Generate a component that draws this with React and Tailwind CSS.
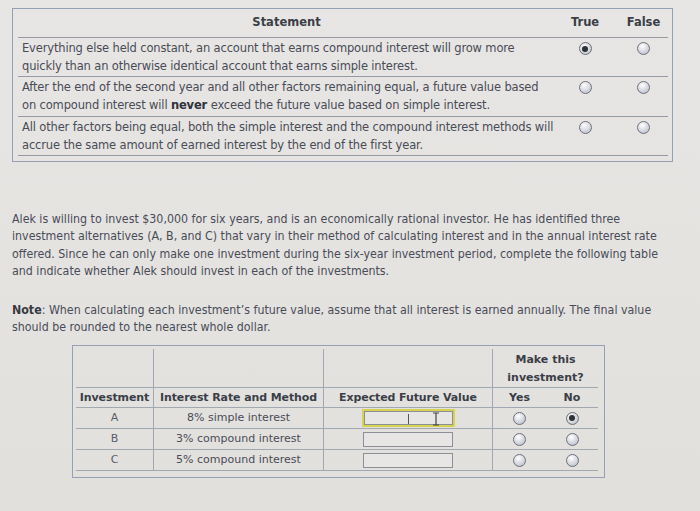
import React from "react";

const Radio = ({ checked = false }) => (
  <span
    className={
      "inline-block w-[13px] h-[13px] rounded-full border border-[#6d717b] relative " +
      (checked
        ? "bg-[radial-gradient(circle_at_40%_35%,#ffffff,#c9ccd3_70%)]"
        : "bg-[radial-gradient(circle_at_40%_30%,#ffffff,#c4c8d2_75%,#9ca1ad)]")
    }
  >
    {checked && (
      <span className="absolute left-[2.5px] top-[2.5px] w-[6px] h-[6px] rounded-full bg-[#2f3138]" />
    )}
  </span>
);

const statements = [
  {
    lines: [
      "Everything else held constant, an account that earns compound interest will grow more",
      "quickly than an otherwise identical account that earns simple interest.",
    ],
    answer: "true",
    h: "h-[39px]",
  },
  {
    lines: [
      "After the end of the second year and all other factors remaining equal, a future value based",
      <>on compound interest will <b className="font-bold text-[#2e323a]">never</b> exceed the future value based on simple interest.</>,
    ],
    answer: null,
    h: "h-[40px]",
  },
  {
    lines: [
      "All other factors being equal, both the simple interest and the compound interest methods will",
      "accrue the same amount of earned interest by the end of the first year.",
    ],
    answer: null,
    h: "h-[39px]",
  },
];

const investments = [
  { id: "A", rate: "8% simple interest", focused: true, choice: "no" },
  { id: "B", rate: "3% compound interest", focused: false, choice: null },
  { id: "C", rate: "5% compound interest", focused: false, choice: null },
];

export default function App() {
  const verdana = { fontFamily: '"DejaVu Sans", Verdana, sans-serif' };
  const tahoma = { fontFamily: '"DejaVu Sans Condensed", "DejaVu Sans", Tahoma, sans-serif' };

  return (
    <div className="w-[700px] h-[511px] overflow-hidden bg-gradient-to-b from-[#e8e6e4] to-[#e2e0dd] text-[#484c57] pt-[8px]">
      {/* true / false statements */}
      <div className="ml-[12px] w-[661px] h-[154px] border border-[#93a0b5] pl-[5px] pr-[4px]" style={verdana}>
        <div className="grid grid-cols-[537px_60px_53px] h-[29px] items-center border-b border-[#959aa3] text-[11.5px] font-bold text-[#3a3e47]">
          <div className="text-center">Statement</div>
          <div className="text-center">True</div>
          <div className="text-center pl-[4px]">False</div>
        </div>
        {statements.map((s, i) => (
          <div key={i} className={"grid grid-cols-[537px_60px_53px] border-b border-[#959aa3] " + s.h}>
            <div className="pl-[4px] pt-[1px] text-[11.5px] leading-[18px] tracking-[-0.15px] whitespace-nowrap">
              <div>{s.lines[0]}</div>
              <div>{s.lines[1]}</div>
            </div>
            <div className="flex justify-center pt-[4px]">
              <Radio checked={s.answer === "true"} />
            </div>
            <div className="flex justify-center pt-[4px] pl-[4px]">
              <Radio checked={s.answer === "false"} />
            </div>
          </div>
        ))}
      </div>

      {/* problem text */}
      <div className="ml-[12px] mt-[49px] text-[12.3px] leading-[17.4px] whitespace-nowrap" style={tahoma}>
        <p>
          Alek is willing to invest $30,000 for six years, and is an economically rational investor. He has identified three
          <br />
          investment alternatives (A, B, and C) that vary in their method of calculating interest and in the annual interest rate
          <br />
          offered. Since he can only make one investment during the six-year investment period, complete the following table
          <br />
          and indicate whether Alek should invest in each of the investments.
        </p>
        <p className="mt-[21px]">
          <b className="font-bold text-[#363a43]">Note</b>: When calculating each investment’s future value, assume that all interest is earned annually. The final value
          <br />
          should be rounded to the nearest whole dollar.
        </p>
      </div>

      {/* investment table */}
      <div className="ml-[72px] mt-[9px] w-[533px] h-[133px] border border-[#93a0b5] pl-[3px] pr-[6px] pt-[3px]" style={verdana}>
        <div className="grid grid-cols-[78px_170px_169px_53px_52px] text-[11px] text-[#484c57]">
          {/* header row 1 */}
          <div className="h-[39px] border-b border-r border-[#a2a8b2]" />
          <div className="h-[39px] border-b border-r border-[#a2a8b2]" />
          <div className="h-[39px] border-b border-r border-[#a2a8b2]" />
          <div className="col-span-2 h-[39px] border-b border-[#a2a8b2] flex flex-col items-center justify-center font-bold text-[#3a3e47] leading-[18px] pt-[1px]">
            <span>Make this</span>
            <span>investment?</span>
          </div>

          {/* header row 2 */}
          <div className="h-[20px] border-b border-r border-[#a2a8b2] flex items-center justify-center font-bold text-[#3a3e47] tracking-[-0.1px]">Investment</div>
          <div className="h-[20px] border-b border-r border-[#a2a8b2] flex items-center justify-center font-bold text-[#3a3e47] tracking-[-0.1px]">Interest Rate and Method</div>
          <div className="h-[20px] border-b border-r border-[#a2a8b2] flex items-center justify-center font-bold text-[#3a3e47] tracking-[-0.1px]">Expected Future Value</div>
          <div className="h-[20px] border-b border-[#a2a8b2] flex items-center justify-center font-bold text-[#3a3e47]">Yes</div>
          <div className="h-[20px] border-b border-[#a2a8b2] flex items-center justify-center font-bold text-[#3a3e47]">No</div>

          {investments.map((inv) => (
            <React.Fragment key={inv.id}>
              <div className="h-[21px] border-b border-r border-[#a2a8b2] flex items-center justify-center text-[#5a5e68]">{inv.id}</div>
              <div className="h-[21px] border-b border-r border-[#a2a8b2] flex items-center justify-center">{inv.rate}</div>
              <div className="h-[21px] border-b border-r border-[#a2a8b2] flex items-center justify-center">
                {inv.focused ? (
                  <div className="relative w-[93px] h-[18px] border-2 border-[#d6d34f] rounded-[1px]">
                    <div className="w-full h-full border border-[#8c8f96] bg-[#e7e6e4]" />
                    <span className="absolute left-[44px] top-[3px] w-px h-[10px] bg-[#555]" />
                    <svg className="absolute left-[68px] top-[1px]" width="8" height="14" viewBox="0 0 8 14">
                      <path d="M1 1 H7 M4 1 V13 M1 13 H7" stroke="#444" strokeWidth="1.2" fill="none" />
                    </svg>
                  </div>
                ) : (
                  <div className="w-[90px] h-[15px] border border-[#8c8f96] bg-[#e7e6e4]" />
                )}
              </div>
              <div className="h-[21px] border-b border-[#a2a8b2] flex items-center justify-center">
                <Radio checked={inv.choice === "yes"} />
              </div>
              <div className="h-[21px] border-b border-[#a2a8b2] flex items-center justify-center">
                <Radio checked={inv.choice === "no"} />
              </div>
            </React.Fragment>
          ))}
        </div>
      </div>
    </div>
  );
}
